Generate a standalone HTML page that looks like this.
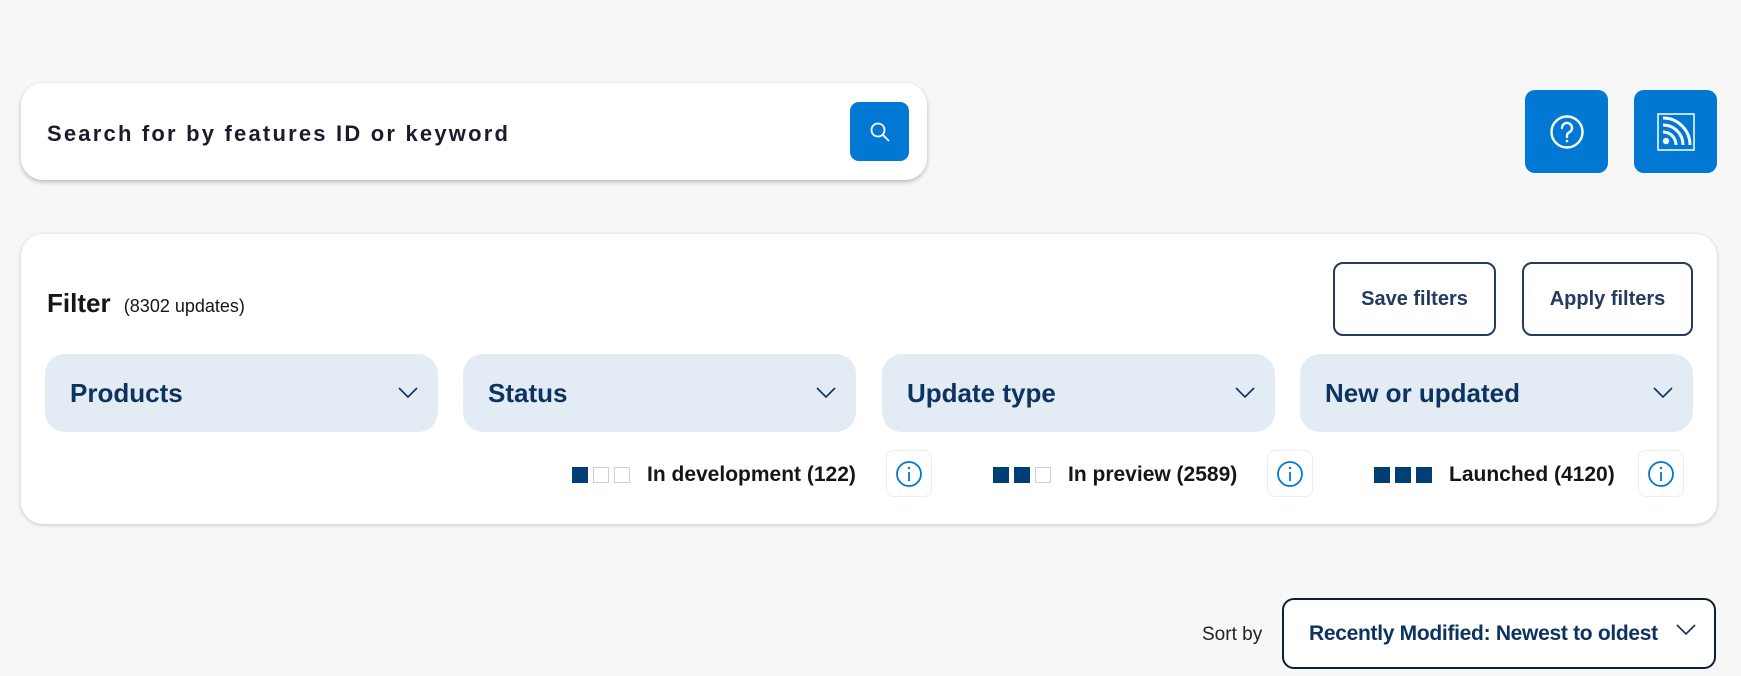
<!DOCTYPE html>
<html><head><style>
*{box-sizing:border-box;margin:0;padding:0}
body{width:1741px;height:676px;background:#f7f7f7;font-family:"Liberation Sans",sans-serif;position:relative;overflow:hidden;color:#161616}
.abs{position:absolute}
.search{left:21px;top:83px;width:906px;height:97px;background:#fff;border-radius:22px;box-shadow:0 2px 5px rgba(0,0,0,.25)}
.search span{position:absolute;left:26px;top:38px;font-size:22px;font-weight:bold;letter-spacing:2.2px;color:#1b1b2f}
.sbtn{left:850px;top:102px;width:59px;height:59px;background:#0078d4;border-radius:9px;display:flex;align-items:center;justify-content:center}
.ibtn{top:90px;width:83px;height:83px;background:#0078d4;border-radius:10px;display:flex;align-items:center;justify-content:center}
.card{left:21px;top:234px;width:1696px;height:290px;background:#fff;border-radius:22px;box-shadow:0 1px 4px rgba(0,0,0,.2)}
.ob{top:262px;height:74px;border:2.5px solid #243a5e;border-radius:10px;background:#fff;display:flex;align-items:center;justify-content:center;font-size:20px;font-weight:bold;color:#243a5e}
.dd{top:354px;height:78px;width:393px;background:#e3ebf4;border-radius:20px;font-size:26px;font-weight:bold;color:#0d3361;padding-left:25px;display:flex;align-items:center}
.dd svg{position:absolute;right:20px;top:33px}
.lg{top:463px;font-size:21px;font-weight:bold;color:#161616;display:flex;align-items:center;gap:5px}
.sq{width:16px;height:16px;border:1px solid #c8d0da;display:inline-block}
.sq.f{background:#003f75;border-color:#003f75}
.info{top:450px;width:46px;height:47px;border:1px solid #e6eef7;border-radius:8px;display:flex;align-items:center;justify-content:center;background:#fff}
</style></head><body>
<div class="abs search"><span>Search for by features ID or keyword</span></div>
<div class="abs sbtn"><svg width="22" height="22" viewBox="0 0 22 22" fill="none" stroke="#fff" stroke-width="1.8"><circle cx="9" cy="9" r="6.5"/><path d="M13.7 13.7L20 20"/></svg></div>
<div class="abs ibtn" style="left:1525px"><svg width="36" height="36" viewBox="0 0 36 36" fill="none" stroke="#fff" stroke-width="2.4"><circle cx="18" cy="18" r="15.5"/><path d="M13 14a5 5 0 1 1 7 4.5c-1.5.7-2 1.6-2 3v1.5" stroke-linecap="round"/><circle cx="18" cy="27" r="1.3" fill="#fff" stroke="none"/></svg></div>
<div class="abs ibtn" style="left:1634px"><svg width="38" height="38" viewBox="0 0 38 38" fill="none" stroke="#fff"><rect x="1" y="1" width="36" height="36" stroke-width="1.5"/><circle cx="9" cy="28" r="3.2" fill="#fff" stroke="none"/><path d="M6 19a13 13 0 0 1 13 13M6 12a20 20 0 0 1 20 20M6 5a27 27 0 0 1 27 27" stroke-width="3"/></svg></div>
<div class="abs card"></div>
<div class="abs" style="left:47px;top:288px;font-size:26px;font-weight:bold;color:#161616">Filter <span style="font-size:18px;font-weight:normal;margin-left:6px">(8302 updates)</span></div>
<div class="abs ob" style="left:1333px;width:163px">Save filters</div>
<div class="abs ob" style="left:1522px;width:171px">Apply filters</div>
<div class="abs dd" style="left:45px">Products<svg width="20" height="12" viewBox="0 0 20 12" fill="none" stroke="#0d3361" stroke-width="1.6"><path d="M1 1l9 9 9-9"/></svg></div>
<div class="abs dd" style="left:463px">Status<svg width="20" height="12" viewBox="0 0 20 12" fill="none" stroke="#0d3361" stroke-width="1.6"><path d="M1 1l9 9 9-9"/></svg></div>
<div class="abs dd" style="left:882px">Update type<svg width="20" height="12" viewBox="0 0 20 12" fill="none" stroke="#0d3361" stroke-width="1.6"><path d="M1 1l9 9 9-9"/></svg></div>
<div class="abs dd" style="left:1300px">New or updated<svg width="20" height="12" viewBox="0 0 20 12" fill="none" stroke="#0d3361" stroke-width="1.6"><path d="M1 1l9 9 9-9"/></svg></div>
<div class="abs lg" style="left:572px"><i class="sq f"></i><i class="sq"></i><i class="sq"></i><span style="margin-left:12px">In development (122)</span></div>
<div class="abs lg" style="left:993px"><i class="sq f"></i><i class="sq f"></i><i class="sq"></i><span style="margin-left:12px">In preview (2589)</span></div>
<div class="abs lg" style="left:1374px"><i class="sq f"></i><i class="sq f"></i><i class="sq f"></i><span style="margin-left:12px">Launched (4120)</span></div>
<div class="abs info" style="left:886px"><svg width="28" height="28" viewBox="0 0 28 28" fill="none" stroke="#0078d4" stroke-width="1.8"><circle cx="14" cy="14" r="12"/><path d="M14 12v9"/><circle cx="14" cy="8" r="1.2" fill="#0078d4" stroke="none"/></svg></div>
<div class="abs info" style="left:1267px"><svg width="28" height="28" viewBox="0 0 28 28" fill="none" stroke="#0078d4" stroke-width="1.8"><circle cx="14" cy="14" r="12"/><path d="M14 12v9"/><circle cx="14" cy="8" r="1.2" fill="#0078d4" stroke="none"/></svg></div>
<div class="abs info" style="left:1638px"><svg width="28" height="28" viewBox="0 0 28 28" fill="none" stroke="#0078d4" stroke-width="1.8"><circle cx="14" cy="14" r="12"/><path d="M14 12v9"/><circle cx="14" cy="8" r="1.2" fill="#0078d4" stroke="none"/></svg></div>
<div class="abs" style="left:1202px;top:624px;font-size:19px;color:#222">Sort by</div>
<div class="abs" style="left:1282px;top:598px;width:434px;height:71px;border:2.5px solid #0f1f33;border-radius:12px;background:#fff"></div>
<div class="abs" style="left:1309px;top:622px;font-size:21px;font-weight:bold;color:#0d3361;letter-spacing:-0.3px">Recently Modified: Newest to oldest</div>
<svg class="abs" style="left:1676px;top:624px" width="20" height="12" viewBox="0 0 20 12" fill="none" stroke="#0d3361" stroke-width="1.6"><path d="M1 1l9 9 9-9"/></svg>
</body></html>
